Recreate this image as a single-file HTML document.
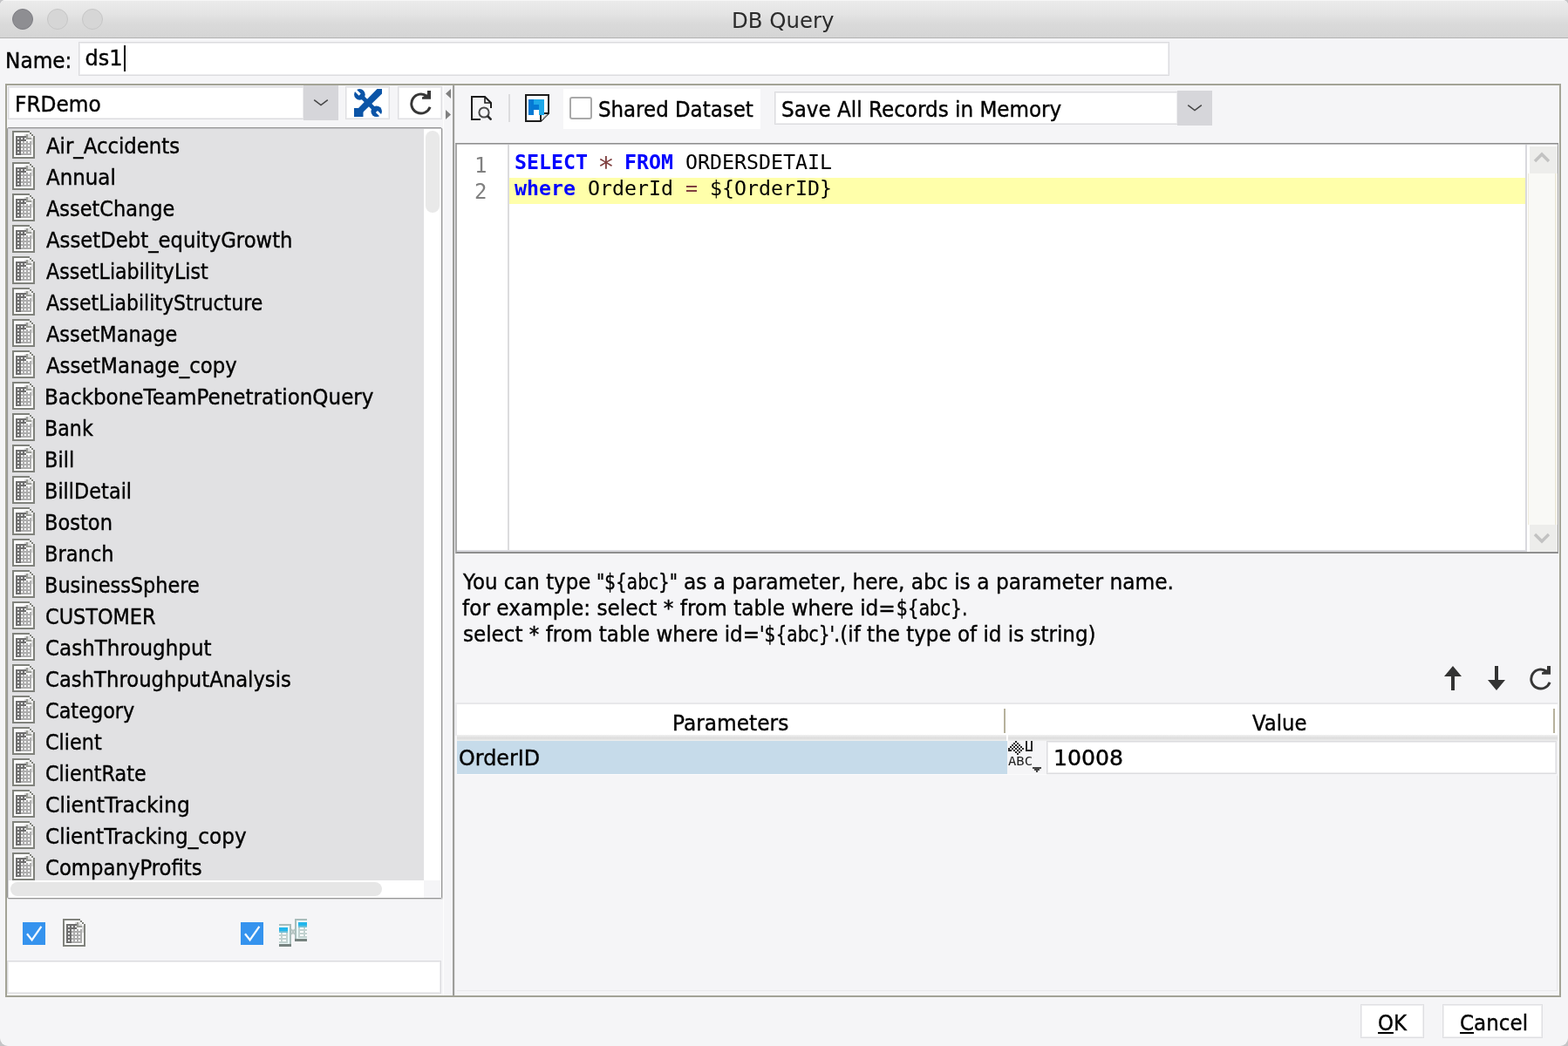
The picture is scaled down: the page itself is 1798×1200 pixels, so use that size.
<!DOCTYPE html><html><head><meta charset="utf-8"><title>DB Query</title><style>
*{box-sizing:border-box;margin:0;padding:0}
html,body{width:1798px;height:1200px;overflow:hidden;background:#c4c4c6}
body{font-family:"DejaVu Sans","Liberation Sans",sans-serif;font-size:24px;color:#000}
#win{position:absolute;left:0;top:0;width:1798px;height:1200px;background:#f5f5f7;border-radius:6px 6px 9px 9px;overflow:hidden}
#win div,#win svg{position:absolute}
#txt{left:0;top:0;width:1798px;height:1200px;will-change:transform}
#tb{left:0;top:0;width:1798px;height:44px;background:linear-gradient(#ebebeb 0%,#e4e4e4 35%,#dadada 62%,#d5d5d5 100%);border-bottom:1px solid #b2b2b2;border-top:1px solid #f6f6f6}
.tl{width:24px;height:24px;border-radius:12px;top:10px;background:#d6d6d6;border:1px solid #c6c6c6}
.t{-webkit-text-stroke:0.4px;white-space:pre;line-height:28px;height:28px;transform-origin:0 0}
.t u{text-decoration-thickness:2px;text-underline-offset:2px}
.m{font-family:"DejaVu Sans Mono","Liberation Mono",monospace;font-size:23.25px;white-space:pre;line-height:30px;height:30px}
.k{color:#0000ff;font-weight:bold}
.o{color:#7f3f3f}
.as{display:inline-block;transform:translateY(4.8px) scale(1.38)}
.fld{background:#fff;border:1px solid #dcdcdf;box-shadow:inset 0 0 0 1px #ededef}
.btn{background:#fff;border:1px solid #dfdfe2;box-shadow:inset 0 0 0 1px #efeff1}
</style></head><body>
<svg width="0" height="0" style="position:absolute"><defs>
<symbol id="tbl" viewBox="0 0 26 32">
<path d="M0 0H20V2H22V4H24V6H26V32H0Z" fill="#80827c"/>
<path d="M2 2H20V4H22V6H24V30H2Z" fill="#fff"/>
<path d="M14 4H20V6H22V8H24V16H22V10H14Z" fill="#d9d9d9"/>
<path d="M16 8H22V10H16Z" fill="#9a9c96"/>
<path d="M16 4H18V10H16Z" fill="#9a9c96"/>
<rect x="4" y="6" width="6" height="22" fill="#6e6e6e"/>
<rect x="4" y="6" width="12" height="6" fill="#6e6e6e"/>
<rect x="10" y="12" width="12" height="16" fill="#adadad"/>
<g fill="#dedede"><rect x="6" y="8" width="2" height="2"/><rect x="10" y="8" width="2" height="2"/><rect x="14" y="8" width="2" height="2"/><rect x="6" y="12" width="2" height="2"/><rect x="6" y="16" width="2" height="2"/><rect x="6" y="20" width="2" height="2"/><rect x="6" y="24" width="2" height="2"/></g>
<g fill="#fff"><rect x="10" y="12" width="2" height="2"/><rect x="14" y="12" width="2" height="2"/><rect x="18" y="12" width="2" height="2"/><rect x="10" y="16" width="2" height="2"/><rect x="14" y="16" width="2" height="2"/><rect x="18" y="16" width="2" height="2"/><rect x="10" y="20" width="2" height="2"/><rect x="14" y="20" width="2" height="2"/><rect x="18" y="20" width="2" height="2"/><rect x="10" y="24" width="2" height="2"/><rect x="14" y="24" width="2" height="2"/><rect x="18" y="24" width="2" height="2"/></g>
</symbol>
<symbol id="rfr" viewBox="0 0 28 28">
<path d="M21.6 6.4A11 11 0 1 0 25.1 18.8" fill="none" stroke="#363636" stroke-width="2.9"/>
<path d="M22 0H26V9.8H16V7.6L22 4.2Z" fill="#363636"/>
</symbol>
<symbol id="chk" viewBox="0 0 26 26">
<rect width="26" height="26" fill="#3593ee"/>
<path d="M5 13.2L10.6 20.4L21.4 4.8" fill="none" stroke="#fff" stroke-width="2.3" stroke-opacity=".94"/>
</symbol>
<symbol id="chev" viewBox="0 0 24 16"><path d="M4.2 4.6L12 10.6L19.8 4.6" fill="none" stroke="#444" stroke-width="1.5"/></symbol>
</defs></svg>
<div id="win">
<div id="tb"></div>
<div class="tl" style="left:14px;background:#8e8e92;border-color:#7e7e84"></div><div class="tl" style="left:54px"></div><div class="tl" style="left:94px"></div>
<div class="fld" style="left:90px;top:48px;width:1251px;height:39px"></div>
<div style="left:142px;top:52px;width:2px;height:30px;background:#000"></div>
<div style="left:6px;top:96px;width:1784px;height:1048px;border:2px solid #a3a396"></div>
<div class="fld" style="left:9px;top:99px;width:340px;height:38px"></div>
<div style="left:348px;top:98px;width:40px;height:40px;background:#d6d6da"></div>
<svg style="left:356px;top:110px" width="24" height="16"><use href="#chev"/></svg>
<div class="btn" style="left:396px;top:99px;width:51px;height:38px"></div>
<div class="btn" style="left:456px;top:99px;width:51px;height:38px"></div>
<svg style="left:406px;top:102px" width="32" height="32" viewBox="0 0 32 32"><g fill="#0b54a7">
<path d="M26.5 0H32V5.5L10 27L5 22Z"/><rect x="0" y="22" width="10.5" height="10"/>
<circle cx="6.4" cy="6.4" r="6.3"/><circle cx="25.7" cy="25.7" r="6.3"/></g>
<path d="M7 7L26 26" stroke="#0b54a7" stroke-width="4.6"/>
<path d="M0 0L5.6 5.6" stroke="#fff" stroke-width="3" stroke-linecap="square"/><path d="M33 33L27 27" stroke="#fff" stroke-width="3" stroke-linecap="square"/>
</svg>
<svg style="left:468px;top:104px" width="28" height="28"><use href="#rfr"/></svg>
<div style="left:8px;top:146px;width:499px;height:885px;background:#fff;border:1px solid #979797;border-radius:2px;box-shadow:1px 1px 0 rgba(140,140,140,.3)"></div>
<div style="left:9px;top:147px;width:477px;height:863px;background:#e1e1e3;overflow:hidden">
<svg style="left:5px;top:3px" width="26" height="32" shape-rendering="crispEdges"><use href="#tbl"/></svg>
<svg style="left:5px;top:39px" width="26" height="32" shape-rendering="crispEdges"><use href="#tbl"/></svg>
<svg style="left:5px;top:75px" width="26" height="32" shape-rendering="crispEdges"><use href="#tbl"/></svg>
<svg style="left:5px;top:111px" width="26" height="32" shape-rendering="crispEdges"><use href="#tbl"/></svg>
<svg style="left:5px;top:147px" width="26" height="32" shape-rendering="crispEdges"><use href="#tbl"/></svg>
<svg style="left:5px;top:183px" width="26" height="32" shape-rendering="crispEdges"><use href="#tbl"/></svg>
<svg style="left:5px;top:219px" width="26" height="32" shape-rendering="crispEdges"><use href="#tbl"/></svg>
<svg style="left:5px;top:255px" width="26" height="32" shape-rendering="crispEdges"><use href="#tbl"/></svg>
<svg style="left:5px;top:291px" width="26" height="32" shape-rendering="crispEdges"><use href="#tbl"/></svg>
<svg style="left:5px;top:327px" width="26" height="32" shape-rendering="crispEdges"><use href="#tbl"/></svg>
<svg style="left:5px;top:363px" width="26" height="32" shape-rendering="crispEdges"><use href="#tbl"/></svg>
<svg style="left:5px;top:399px" width="26" height="32" shape-rendering="crispEdges"><use href="#tbl"/></svg>
<svg style="left:5px;top:435px" width="26" height="32" shape-rendering="crispEdges"><use href="#tbl"/></svg>
<svg style="left:5px;top:471px" width="26" height="32" shape-rendering="crispEdges"><use href="#tbl"/></svg>
<svg style="left:5px;top:507px" width="26" height="32" shape-rendering="crispEdges"><use href="#tbl"/></svg>
<svg style="left:5px;top:543px" width="26" height="32" shape-rendering="crispEdges"><use href="#tbl"/></svg>
<svg style="left:5px;top:579px" width="26" height="32" shape-rendering="crispEdges"><use href="#tbl"/></svg>
<svg style="left:5px;top:615px" width="26" height="32" shape-rendering="crispEdges"><use href="#tbl"/></svg>
<svg style="left:5px;top:651px" width="26" height="32" shape-rendering="crispEdges"><use href="#tbl"/></svg>
<svg style="left:5px;top:687px" width="26" height="32" shape-rendering="crispEdges"><use href="#tbl"/></svg>
<svg style="left:5px;top:723px" width="26" height="32" shape-rendering="crispEdges"><use href="#tbl"/></svg>
<svg style="left:5px;top:759px" width="26" height="32" shape-rendering="crispEdges"><use href="#tbl"/></svg>
<svg style="left:5px;top:795px" width="26" height="32" shape-rendering="crispEdges"><use href="#tbl"/></svg>
<svg style="left:5px;top:831px" width="26" height="32" shape-rendering="crispEdges"><use href="#tbl"/></svg>
</div>
<div style="left:9px;top:147px;width:497px;height:1px;background:#c4c4c8"></div>
<div style="left:9px;top:148px;width:1px;height:882px;background:#d4d4d8"></div>
<div style="left:488px;top:150px;width:16px;height:94px;border-radius:8px;background:#e9e9e9"></div>
<div style="left:12px;top:1012px;width:426px;height:16px;border-radius:8px;background:#e6e6e6"></div>
<div style="left:486px;top:1010px;width:20px;height:20px;background:#f5f5f7"></div>
<svg style="left:26px;top:1058px" width="26" height="26"><use href="#chk"/></svg>
<svg style="left:72px;top:1054px" width="26" height="32" shape-rendering="crispEdges"><use href="#tbl"/></svg>
<svg style="left:276px;top:1058px" width="26" height="26"><use href="#chk"/></svg>
<svg style="left:320px;top:1054px" width="32" height="32" viewBox="0 0 32 32" shape-rendering="crispEdges">
<rect x="0" y="6" width="14" height="26" fill="#a9bdbb"/><rect x="0" y="8" width="12" height="21" fill="#e8f6f6"/><rect x="0" y="29" width="14" height="3" fill="#76827f"/>
<rect x="0" y="10" width="10" height="4" fill="#22b6ec"/><rect x="0" y="14" width="10" height="2" fill="#6cc0d8"/><rect x="0" y="16" width="10" height="12" fill="#c2d2d0"/>
<g fill="#fff"><rect x="0" y="16" width="2" height="2"/><rect x="4" y="16" width="4" height="2"/><rect x="0" y="20" width="2" height="2"/><rect x="4" y="20" width="4" height="2"/><rect x="0" y="24" width="2" height="2"/><rect x="4" y="24" width="4" height="2"/></g>
<rect x="18" y="0" width="14" height="26" fill="#a9bdbb"/><rect x="20" y="2" width="12" height="21" fill="#e8f6f6"/><rect x="18" y="23" width="14" height="3" fill="#76827f"/>
<rect x="22" y="4" width="10" height="4" fill="#22b6ec"/><rect x="22" y="8" width="10" height="2" fill="#6cc0d8"/><rect x="22" y="10" width="10" height="12" fill="#c2d2d0"/>
<g fill="#fff"><rect x="24" y="10" width="4" height="2"/><rect x="30" y="10" width="2" height="2"/><rect x="24" y="14" width="4" height="2"/><rect x="30" y="14" width="2" height="2"/><rect x="24" y="18" width="4" height="2"/><rect x="30" y="18" width="2" height="2"/></g>
<path d="M14 18L18 12M14 12L18 18" stroke="#b5c4c2" stroke-width="2" shape-rendering="auto"/>
</svg>
<div class="fld" style="left:8px;top:1102px;width:498px;height:38px"></div>
<div style="left:508px;top:98px;width:1px;height:1044px;background:#fdfdfd"></div>
<div style="left:519px;top:98px;width:2px;height:1044px;background:#9d9d9a"></div>
<div style="left:521px;top:98px;width:1px;height:1044px;background:#e6e6e8"></div>
<svg style="left:510px;top:100px" width="8" height="40" viewBox="0 0 8 40"><path d="M7 2V13L1 7.5Z" fill="#808080"/><path d="M1 26V37L7 31.5Z" fill="#808080"/></svg>
<svg style="left:540px;top:110px" width="24" height="28" viewBox="0 0 24 28"><path d="M11 27H1V1H16L23 8V14" fill="none" stroke="#1c1c1c" stroke-width="2"/><path d="M16 1V8H23" fill="none" stroke="#1c1c1c" stroke-width="1.6"/><circle cx="15" cy="19" r="5.6" fill="none" stroke="#4a4a4a" stroke-width="2"/><path d="M19 23L23.5 27.5" stroke="#2a2a2a" stroke-width="2.6"/></svg>
<div style="left:583px;top:108px;width:2px;height:32px;background:#dcdcde"></div>
<svg style="left:602px;top:108px" width="28" height="32" viewBox="0 0 28 32"><path d="M1 1H27V22L18 31H1Z" fill="#fff" stroke="#1c1c1c" stroke-width="2"/><path d="M18 31V22H27" fill="#f0f0f0" stroke="#1c1c1c" stroke-width="2"/><path d="M21 28L25 24" stroke="#888" stroke-width="1.5"/>
<path d="M4 6H22V24H16V18H10V24H4Z" fill="#0479d4"/><path d="M10 6H22V24H16V12H10Z" fill="#1ea8e8"/></svg>
<div style="left:646px;top:102px;width:226px;height:46px;background:#fff"></div>
<div style="left:653px;top:111px;width:26px;height:26px;background:#fff;border:2px solid #a9a9a9;border-radius:3px"></div>
<div class="fld" style="left:888px;top:105px;width:463px;height:38px"></div>
<div style="left:1350px;top:104px;width:40px;height:40px;background:#d6d6da"></div>
<svg style="left:1358px;top:116px" width="24" height="16"><use href="#chev"/></svg>
<div style="left:522px;top:164px;width:1265px;height:471px;background:#fff;border:2px solid #8e8e8e;border-left-color:#a9a9a9;border-right:1px solid #9c9c9c"></div>
<div style="left:524px;top:165px;width:1262px;height:1px;background:#bdbdbf"></div>
<div style="left:582px;top:166px;width:2px;height:465px;background:#dcdcde"></div>
<div style="left:584px;top:204px;width:1165px;height:30px;background:#ffffaa"></div>
<div style="left:524px;top:631px;width:1227px;height:2px;background:#d9d9de"></div>
<div style="left:1749px;top:166px;width:2px;height:467px;background:#d9d9de"></div>
<div style="left:1751px;top:166px;width:35px;height:467px;background:#fff"></div>
<div style="left:1752px;top:199px;width:33px;height:403px;background:#f9f9f6;border-left:1px solid #efebdd;border-right:2px solid #efebdd"></div>
<div style="left:1754px;top:168px;width:32px;height:31px;background:#ededeb"></div>
<div style="left:1754px;top:602px;width:32px;height:31px;background:#ededeb"></div>
<svg style="left:1758px;top:174px" width="20" height="14" viewBox="0 0 20 14"><path d="M2 11L10 3L18 11" fill="none" stroke="#c2c2c2" stroke-width="3.4"/></svg>
<svg style="left:1758px;top:610px" width="20" height="14" viewBox="0 0 20 14"><path d="M2 3L10 11L18 3" fill="none" stroke="#c2c2c2" stroke-width="3.4"/></svg>
<svg style="left:1656px;top:764px" width="20" height="28" viewBox="0 0 20 28"><path d="M10 0L20 12H12V28H8V12H0Z" fill="#333"/></svg>
<svg style="left:1706px;top:764px" width="20" height="28" viewBox="0 0 20 28"><path d="M10 28L20 16H12V0H8V16H0Z" fill="#333"/></svg>
<svg style="left:1751.5px;top:764px" width="28" height="28"><use href="#rfr"/></svg>
<div style="left:522px;top:806px;width:1264px;height:38px;background:#fff;border-top:2px solid #e8e8ea;border-left:2px solid #ececee"></div>
<div style="left:524px;top:843px;width:1262px;height:7px;background:linear-gradient(#f1f1f1,#dcdcdc 55%,#efefef)"></div>
<div style="left:1154px;top:843px;width:2px;height:7px;background:#fff"></div>
<div style="left:1151px;top:813px;width:2px;height:28px;background:#b6b19c"></div>
<div style="left:1781px;top:813px;width:2px;height:28px;background:#b6b19c"></div>
<div style="left:524px;top:850px;width:631px;height:38px;background:#c6dbea"></div>
<div style="left:524px;top:888px;width:676px;height:1px;background:#fbfbfc"></div>
<div class="fld" style="left:1200px;top:850px;width:585px;height:38px"></div>
<svg style="left:1156px;top:850px;will-change:transform" width="40" height="38" viewBox="0 0 40 38" shape-rendering="crispEdges"><g fill="#2a2a2a">
<path d="M8 0h2v2h-2zM6 2h2v2h-2zM10 2h2v2h-2zM4 4h2v2h-2zM8 4h2v2h-2zM12 4h2v2h-2zM2 6h2v2h-2zM6 6h2v2h-2zM10 6h2v2h-2zM14 6h2v2h-2zM0 8h2v4h-2zM2 10h2v2h-2zM4 8h2v2h-2zM8 8h2v2h-2zM12 8h2v2h-2zM16 8h2v2h-2zM6 10h2v2h-2zM10 10h2v2h-2zM14 10h2v2h-2zM8 12h2v2h-2zM12 12h2v2h-2zM10 14h2v2h-2z"/>
<path d="M20 0h2v10h4v-10h2v12h-8z"/></g>
<text x="0" y="28" font-family="DejaVu Sans Mono,Liberation Mono,monospace" font-size="13.5" fill="#222" textLength="28" lengthAdjust="spacingAndGlyphs" shape-rendering="auto">ABC</text>
<path d="M28 30h10v2h-2v2h-2v2h-2v-2h-2v-2h-2z" fill="#444"/></svg>
<div style="left:1785px;top:890px;width:1px;height:247px;background:#e9e9eb"></div>
<div style="left:524px;top:1136px;width:1262px;height:1px;background:#e9e9eb"></div>
<div class="btn" style="left:1560px;top:1152px;width:73px;height:39px"></div>
<div class="btn" style="left:1654px;top:1152px;width:115px;height:39px"></div>
<div id="txt">
<div class="t" style="left:838.75px;top:10px;transform:scaleX(0.9769);font-size:25px;color:#2b2b2b;-webkit-text-stroke:0">DB Query</div>
<div class="t" style="left:5.76px;top:55.5px;transform:scaleX(0.9689);">Name:</div>
<div class="t" style="left:97.50px;top:53px;transform:scaleX(1.0000);">ds1</div>
<div class="t" style="left:17.26px;top:106px;transform:scaleX(0.9694);">FRDemo</div>
<div class="t" style="left:52.50px;top:154px;transform:scaleX(0.9500);">Air_Accidents</div>
<div class="t" style="left:52.50px;top:190px;transform:scaleX(0.9568);">Annual</div>
<div class="t" style="left:52.50px;top:226px;transform:scaleX(0.9346);">AssetChange</div>
<div class="t" style="left:52.50px;top:262px;transform:scaleX(0.9486);">AssetDebt_equityGrowth</div>
<div class="t" style="left:52.50px;top:298px;transform:scaleX(0.9229);">AssetLiabilityList</div>
<div class="t" style="left:52.50px;top:334px;transform:scaleX(0.9167);">AssetLiabilityStructure</div>
<div class="t" style="left:52.50px;top:370px;transform:scaleX(0.9344);">AssetManage</div>
<div class="t" style="left:52.50px;top:406px;transform:scaleX(0.9498);">AssetManage_copy</div>
<div class="t" style="left:51.38px;top:442px;transform:scaleX(0.9608);">BackboneTeamPenetrationQuery</div>
<div class="t" style="left:51.45px;top:478px;transform:scaleX(0.9259);">Bank</div>
<div class="t" style="left:51.42px;top:514px;transform:scaleX(0.9375);">Bill</div>
<div class="t" style="left:51.43px;top:550px;transform:scaleX(0.9340);">BillDetail</div>
<div class="t" style="left:51.42px;top:586px;transform:scaleX(0.9392);">Boston</div>
<div class="t" style="left:51.42px;top:622px;transform:scaleX(0.9407);">Branch</div>
<div class="t" style="left:51.43px;top:658px;transform:scaleX(0.9342);">BusinessSphere</div>
<div class="t" style="left:52.07px;top:694px;transform:scaleX(0.9328);">CUSTOMER</div>
<div class="t" style="left:52.04px;top:730px;transform:scaleX(0.9594);">CashThroughput</div>
<div class="t" style="left:52.05px;top:766px;transform:scaleX(0.9475);">CashThroughputAnalysis</div>
<div class="t" style="left:52.07px;top:802px;transform:scaleX(0.9333);">Category</div>
<div class="t" style="left:52.07px;top:838px;transform:scaleX(0.9309);">Client</div>
<div class="t" style="left:52.07px;top:874px;transform:scaleX(0.9287);">ClientRate</div>
<div class="t" style="left:52.02px;top:910px;transform:scaleX(0.9789);">ClientTracking</div>
<div class="t" style="left:52.03px;top:946px;transform:scaleX(0.9662);">ClientTracking_copy</div>
<div class="t" style="left:52.05px;top:982px;transform:scaleX(0.9492);">CompanyProfits</div>
<div class="t" style="left:686.39px;top:112px;transform:scaleX(0.9549);">Shared Dataset</div>
<div class="t" style="left:896.08px;top:112px;transform:scaleX(0.9616);">Save All Records in Memory</div>
<div class="t" style="left:531.00px;top:653.6px;transform:scaleX(0.9539);">You can type </div>
<div class="t" style="left:684.33px;top:653.6px;transform:scaleX(0.8374);">"${abc}" </div>
<div class="t" style="left:784.03px;top:653.6px;transform:scaleX(0.9715);">as a parameter, here, abc is a parameter name.</div>
<div class="t" style="left:530.03px;top:683.6px;transform:scaleX(0.9676);">for example: select * from table where id=</div>
<div class="t" style="left:1028.32px;top:683.6px;transform:scaleX(0.8424);">${abc}.</div>
<div class="t" style="left:530.64px;top:713.6px;transform:scaleX(0.9611);">select * from table where id=</div>
<div class="t" style="left:870.71px;top:713.6px;transform:scaleX(0.8429);">'${abc}'</div>
<div class="t" style="left:956.12px;top:713.6px;transform:scaleX(0.9591);">.(if the type of id is string)</div>
<div class="t" style="left:771.06px;top:815.6px;transform:scaleX(0.9701);">Parameters</div>
<div class="t" style="left:1436.40px;top:815.6px;transform:scaleX(0.9477);">Value</div>
<div class="t" style="left:525.51px;top:856px;transform:scaleX(0.9945);">OrderID</div>
<div class="t" style="left:1208.00px;top:856px;transform:scaleX(1.0480);">10008</div>
<div class="t" style="left:1579.65px;top:1159.7px;transform:scaleX(0.9500);"><u>O</u>K</div>
<div class="t" style="left:1673.64px;top:1159.7px;transform:scaleX(0.9603);"><u>C</u>ancel</div>
<div class="m" style="left:590px;top:170.5px"><span class="k">SELECT</span> <span class="o as">*</span> <span class="k">FROM</span> ORDERSDETAIL</div>
<div class="m" style="left:590px;top:200.5px"><span class="k">where</span> OrderId <span class="o">=</span> ${OrderID}</div>
<div class="m" style="left:544px;top:175px;font-size:24px;color:#808080">1</div>
<div class="m" style="left:544px;top:205px;font-size:24px;color:#808080">2</div>
</div>
</div></body></html>
